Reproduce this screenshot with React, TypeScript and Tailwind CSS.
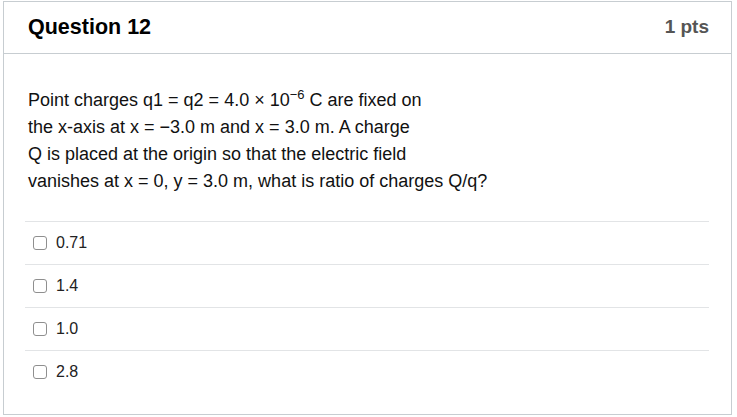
import React from 'react';

const ANSWERS = ['0.71', '1.4', '1.0', '2.8'];

export default function App() {
  return (
    <div className="min-h-[417px] w-[737px] bg-white pl-[3px] pt-[1px]" style={{ fontFamily: '"Liberation Sans", Arial, sans-serif' }}>
      <div className="flex h-[414px] w-[729px] flex-col border border-[#c7cdd1] text-black">
        {/* Header */}
        <div className="flex h-[52px] shrink-0 items-center justify-between border-b border-[#c7cdd1] pl-[24px] pr-[22px]">
          <span className="text-[21.5px] font-bold">Question 12</span>
          <span className="text-[19px] font-bold text-[#555555]">1 pts</span>
        </div>

        {/* Body */}
        <div className="px-[21px] pt-[33px]">
          <div className="pl-[3px] text-[18px] leading-[27px] text-[#111]">
            Point charges q1 = q2 = 4.0 × 10<sup className="relative -top-[7px] text-[13px] leading-none">−6</sup> C are fixed on
            <br />
            the x-axis at x = −3.0 m and x = 3.0 m. A charge
            <br />
            Q is placed at the origin so that the electric field
            <br />
            vanishes at x = 0, y = 3.0 m, what is ratio of charges Q/q?
          </div>

          <div className="mt-[26px] w-[684px]">
            {ANSWERS.map((a) => (
              <div key={a} className="flex h-[43px] items-center gap-[9px] border-t border-[#e2e4e6] pl-[8px]">
                <span className="h-[14px] w-[14px] rounded-[3px] border border-[#8f8f8f] bg-white" />
                <span className="text-[16px] text-[#222]">{a}</span>
              </div>
            ))}
          </div>
        </div>
      </div>
    </div>
  );
}
